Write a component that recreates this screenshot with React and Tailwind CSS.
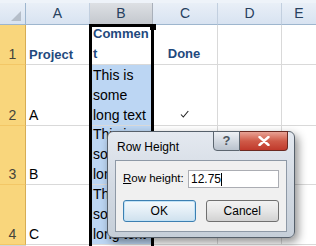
import React from 'react'

const cellFont = { fontFamily: '"Liberation Sans", Arial, sans-serif' }

function ColHead({ label, active, last }) {
  return (
    <div
      className={`flex items-center justify-center border-b border-[#9eb6ce] text-[14px] text-[#27405e] ${last ? '' : 'border-r'} ${
        active ? 'bg-gradient-to-b from-[#dde0e4] to-[#c4c8ce] border-r-[#a9b0ba]' : 'bg-gradient-to-b from-[#e9eff7] to-[#d8e3f1] border-r-[#c2cfdf]'
      }`}
    >
      {label}
    </div>
  )
}

function RowHead({ n, className }) {
  return (
    <div className={`flex items-end justify-center bg-[#f9d67c] border-r border-[#d6ad55] border-b border-b-[#f3c766] text-[14px] leading-[20px] text-[#44433b] ${className}`}>
      {n}
    </div>
  )
}

function Cell({ children, className = '', center, last }) {
  return (
    <div
      className={`flex flex-col justify-end border-b border-[#d9d9d9] ${last ? '' : 'border-r'} border-r-[#d9d9d9] text-[14px] leading-[20px] text-black px-[3px] overflow-hidden whitespace-nowrap ${center ? 'items-center' : 'items-start'} ${className}`}
    >
      {children}
    </div>
  )
}

function LongText() {
  return (
    <>
      <span>This is</span>
      <span>some</span>
      <span>long text</span>
    </>
  )
}

function Check() {
  return (
    <svg width="9" height="8" viewBox="0 0 9 8" className="mb-[7px] mr-[2px]">
      <path d="M1 4.5 L3.3 7 L8.3 1" fill="none" stroke="#222" strokeWidth="1.1" />
    </svg>
  )
}

export default function App() {
  const rows = [
    { n: 1, a: 'Project', aBold: true, b: 'comment', c: 'Done' },
    { n: 2, a: 'A', b: 'text', c: 'check' },
    { n: 3, a: 'B', b: 'text' },
    { n: 4, a: 'C', b: 'text' },
  ]
  const heights = ['h-[40px]', 'h-[61px]', 'h-[59px]', 'h-[60px]']

  return (
    <div className="relative w-[316px] h-[246px] overflow-hidden bg-white" style={cellFont}>
      <div className="h-[3px] bg-[#eef3f9]" />
      <div className="grid grid-cols-[26px_64px_63px_65px_64px_1fr]">
        {/* header row */}
        <div className="relative h-[22px] border-r border-b border-[#9eb6ce] bg-gradient-to-b from-[#e9eff7] to-[#d8e3f1]">
          <svg width="10" height="10" className="absolute right-[4px] bottom-[3px]" viewBox="0 0 10 10">
            <path d="M10 0 L10 10 L0 10 Z" fill="#b5bec9" />
          </svg>
        </div>
        <ColHead label="A" />
        <ColHead label="B" active />
        <ColHead label="C" />
        <ColHead label="D" />
        <ColHead label="E" last />

        {rows.map((r, i) => (
          <React.Fragment key={r.n}>
            <RowHead n={r.n} className={heights[i]} />
            <Cell className={heights[i]}>
              <span className={r.aBold ? 'font-bold text-[13px] text-[#1f497d] mb-[-1px]' : ''}>{r.a}</span>
            </Cell>
            <Cell className={`${heights[i]} ${i > 0 ? 'bg-[#bcd6f3]' : ''}`}>
              {r.b === 'comment' ? (
                <div className="flex flex-col font-bold text-[13px] text-[#1f497d]">
                  <span>Commen</span>
                  <span>t</span>
                </div>
              ) : (
                <LongText />
              )}
            </Cell>
            <Cell className={heights[i]} center>
              {r.c === 'Done' && <span className="font-bold text-[13px] text-[#1f497d] mr-[2px]">Done</span>}
              {r.c === 'check' && <Check />}
            </Cell>
            <Cell className={heights[i]} />
            <Cell className={heights[i]} last />
          </React.Fragment>
        ))}
        <div className="h-[10px] bg-[#d0d4da]" />
        <div className="h-[10px] col-span-5 bg-white" />
      </div>

      {/* selection outline */}
      <div className="absolute left-[89px] top-[24px] w-[65px] h-[222px] border-[3px] border-black border-b-0" />
      <div className="absolute left-[150px] top-[24px] w-[6px] h-[6px] bg-black" />

      {/* Row Height dialog */}
      <div className="absolute left-[107px] top-[131px] w-[188px] h-[107px] flex flex-col rounded-[6px] border border-[#56606b] bg-gradient-to-b from-[#e4e9f0] via-[#d3dae3] to-[#c6cfd9] shadow-[3px_4px_10px_rgba(0,0,0,0.45)]">
        <div className="relative h-[28px] flex items-center pl-[9px] text-[12px] text-black">
          <span className="mt-[2px]">Row Height</span>
          <div className="absolute right-[6px] top-[-1px] flex">
            <div className="w-[27px] h-[20px] flex items-center justify-center rounded-bl-[4px] border border-[#5c6670] bg-gradient-to-b from-[#eef1f5] via-[#d3d9e1] to-[#b9c2cd] text-[13px] font-bold text-[#4b5560]">
              ?
            </div>
            <div className="w-[48px] h-[20px] flex items-center justify-center rounded-br-[4px] border border-l-0 border-[#6b2a22] bg-gradient-to-b from-[#e8a295] via-[#cf5a48] to-[#c0392b]">
              <svg width="12" height="10" viewBox="0 0 12 10">
                <path d="M1.5 1 L10.5 9 M10.5 1 L1.5 9" stroke="#fff" strokeWidth="2.4" strokeLinecap="round" />
              </svg>
            </div>
          </div>
        </div>
        <div className="flex-1 mx-[7px] mb-[5px] border border-[#8e99a6] bg-[#f0f0f0] pl-[7px] pr-[7px] pt-[9px] text-[12px] text-black">
          <div className="flex items-center justify-between">
            <span className="inline-block text-[11.5px] first-letter:underline">Row height:</span>
            <div className="w-[91px] h-[18px] flex items-center border border-[#abadb3] bg-white pl-[2px]">
              <span>12.75</span>
              <span className="w-px h-[13px] bg-black" />
            </div>
          </div>
          <div className="flex gap-[10px] mt-[12px]">
            <div className="w-[73px] h-[22px] flex items-center justify-center rounded-[3px] border border-[#3c7fb1] bg-gradient-to-b from-[#f4f9fc] via-[#e3eef6] to-[#cfe1ee] shadow-[inset_0_0_0_1px_#c1e2f6]">
              OK
            </div>
            <div className="w-[74px] h-[22px] flex items-center justify-center rounded-[3px] border border-[#707070] bg-gradient-to-b from-[#f2f2f2] via-[#e6e6e6] to-[#d2d2d2]">
              Cancel
            </div>
          </div>
        </div>
      </div>
    </div>
  )
}
